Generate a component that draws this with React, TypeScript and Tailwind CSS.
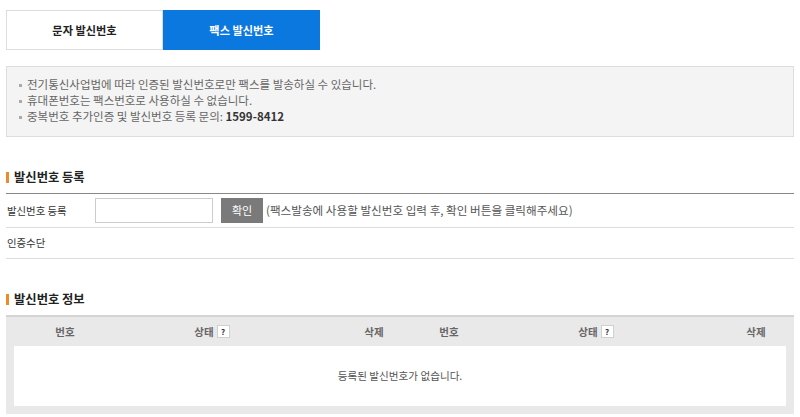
import React from 'react'

const font = { fontFamily: '"Noto Sans CJK KR", "Noto Sans", sans-serif' }

const notices = [
  { text: '전기통신사업법에 따라 인증된 발신번호로만 팩스를 발송하실 수 있습니다.' },
  { text: '휴대폰번호는 팩스번호로 사용하실 수 없습니다.' },
  { text: '중복번호 추가인증 및 발신번호 등록 문의: ', strong: '1599-8412' },
]

function SectionTitle({ children }: { children: React.ReactNode }) {
  return (
    <div className="flex items-center h-4 gap-[5px]">
      <span className="w-[3px] h-[11px] bg-[#f08a24]" />
      <h2 className="text-[12.3px] leading-4 font-bold text-[#222]">{children}</h2>
    </div>
  )
}

function StatusHead() {
  return (
    <span className="flex items-center justify-center gap-[3px]">
      상태
      <span className="w-[13px] h-[13px] bg-white border border-[#d0d0d0] text-[8px] leading-[11px] font-bold text-[#333] text-center">?</span>
    </span>
  )
}

export default function App() {
  return (
    <div className="w-[800px] h-[417px] bg-white px-[6px] pt-[10px] overflow-hidden" style={font}>
      {/* Tabs */}
      <div className="flex h-10">
        <button className="w-[157px] h-10 border border-[#dddddd] bg-white text-[11.2px] font-bold text-[#222]">문자 발신번호</button>
        <button className="w-[157px] h-10 bg-[#0a78df] text-[11.2px] font-bold text-white">팩스 발신번호</button>
      </div>

      {/* Notice box */}
      <div className="mt-4 h-[71px] border border-[#dddddd] bg-[#f4f4f4] pl-[12px] pt-[10px]">
        {notices.map((n, i) => (
          <p key={i} className="flex items-center h-4 gap-[5px] text-[11.5px] text-[#666]">
            <span className="w-[3px] h-[3px] bg-[#aaa]" />
            <span>
              {n.text}
              {n.strong && <b className="text-[#333]">{n.strong}</b>}
            </span>
          </p>
        ))}
      </div>

      {/* Register */}
      <div className="mt-8">
        <SectionTitle>발신번호 등록</SectionTitle>
        <div className="mt-2 border-t border-[#888]">
          <div className="flex items-center h-[34px] border-b border-[#dddddd]">
            <span className="w-[89px] pl-px text-[10.4px] text-[#333]">발신번호 등록</span>
            <input className="w-[118px] h-[25px] border border-[#cccccc] bg-white outline-none" />
            <button className="ml-2 w-[42px] h-[25px] bg-[#7a7a7a] text-white text-[11px]">확인</button>
            <span className="ml-[3px] text-[11.6px] text-[#555]">(팩스발송에 사용할 발신번호 입력 후, 확인 버튼을 클릭해주세요)</span>
          </div>
          <div className="flex items-center h-[31px] border-b border-[#dddddd]">
            <span className="pl-px text-[10.4px] text-[#333]">인증수단</span>
          </div>
        </div>
      </div>

      {/* List */}
      <div className="mt-8">
        <SectionTitle>발신번호 정보</SectionTitle>
        <div className="mt-2 border-t-2 border-[#d4d4d4] bg-[#e9e9e9] px-2 pb-2">
          <div className="flex items-center h-[29px] text-[10.5px] font-bold text-[#666]">
            <span className="ml-[21px] w-[60px] text-center">번호</span>
            <span className="ml-[87px] w-[60px]"><StatusHead /></span>
            <span className="ml-[102px] w-[60px] text-center">삭제</span>
            <span className="ml-[15px] w-[60px] text-center">번호</span>
            <span className="ml-[87px] w-[60px]"><StatusHead /></span>
            <span className="ml-[100px] w-[60px] text-center">삭제</span>
          </div>
          <div className="h-[60px] bg-white flex items-center justify-center text-[10.6px] text-[#555]">
            등록된 발신번호가 없습니다.
          </div>
        </div>
      </div>
    </div>
  )
}
